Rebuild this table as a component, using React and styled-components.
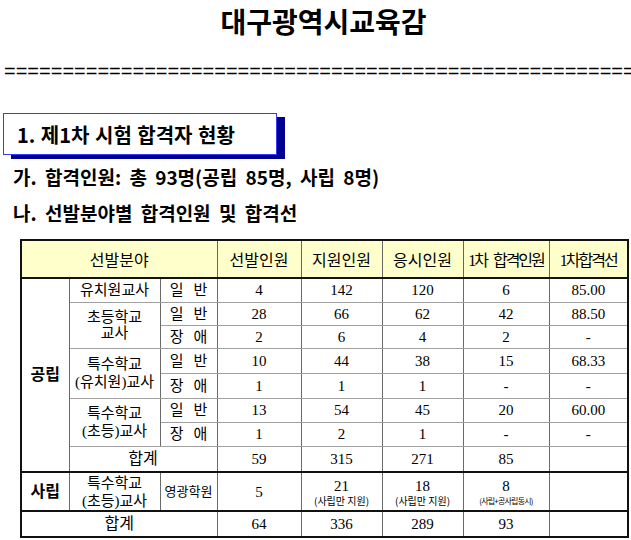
import React from "react";
import styled, { createGlobalStyle } from "styled-components";

const GlobalStyle = createGlobalStyle`
  html, body { margin: 0; padding: 0; background: #fff; }
  body { font-family: "Noto Sans CJK KR", sans-serif; color: #000; }
`;

const Page = styled.div`
  width: 631px;
  height: 540px;
  overflow: hidden;
`;

const Title = styled.h1`
  margin: 0;
  padding-left: 16px;
  height: 43px;
  line-height: 43px;
  text-align: center;
  font-size: 28px;
  font-weight: 700;
`;

const Rule = styled.div`
  margin-top: 18px;
  padding-left: 4px;
  width: 627px;
  height: 20px;
  line-height: 20px;
  font-family: "Liberation Sans", sans-serif;
  font-size: 20px;
  white-space: nowrap;
  overflow: hidden;
`;

const SectionBox = styled.div`
  margin: 32px 0 0 3px;
  width: 274px;
  height: 42px;
  box-sizing: border-box;
  border: 1px solid #3a3aff;
  box-shadow: 8px 4px 0 #000090;
  display: flex;
  align-items: center;
  padding-left: 13px;
  font-size: 20px;
  font-weight: 700;
  word-spacing: 1px;
  white-space: nowrap;
`;

const Lines = styled.div`
  margin-top: 9px;
  padding-left: 13px;
  display: flex;
  flex-direction: column;
  gap: 10px;
`;

const Line = styled.div`
  height: 26px;
  line-height: 26px;
  font-size: 19px;
  font-weight: 700;
  word-spacing: 4px;
  white-space: nowrap;
`;

const Table = styled.table`
  margin: 13px 0 0 20px;
  width: 607px;
  border-collapse: collapse;
  table-layout: fixed;
  border: 2px solid #111;
  font-family: "Liberation Serif", "Noto Sans CJK KR", serif;
`;

const Row = styled.tr`
  height: ${(p) => p.$h}px;
  & > td {
    border-top: ${(p) => (p.$thick ? "2px solid #111" : "1px solid #a0a0a0")};
  }
`;

const Th = styled.th`
  background: #ffffcc;
  font-weight: 400;
  font-size: 16px;
  letter-spacing: ${(p) => (p.$tight ? "-2px" : "0")};
  word-spacing: ${(p) => (p.$tight ? "4px" : "0")};
  border-left: 1px solid #666;
  border-right: 1px solid #666;
  border-bottom: 2px solid #111;
  padding: 0;
  white-space: nowrap;
`;

const Td = styled.td`
  padding: 0;
  text-align: center;
  vertical-align: middle;
  border-left: 1px solid #6a6a6a;
  border-right: 1px solid #6a6a6a;
  border-bottom: 1px solid #a0a0a0;
  font-size: ${(p) => p.$size || 15}px;
  font-weight: ${(p) => (p.$bold ? 700 : 400)};
  line-height: ${(p) => p.$lh || 18}px;
  white-space: nowrap;
`;

const Spaced = styled.span`
  word-spacing: 6px;
`;

const Num = styled.div`
  line-height: 18px;
`;

const Note = styled.div`
  font-family: "Noto Sans CJK KR", sans-serif;
  font-size: ${(p) => p.$size || 10}px;
  line-height: 12px;
  letter-spacing: ${(p) => (p.$tight ? "-0.8px" : "0")};
`;

const Ilban = () => <Spaced>일 반</Spaced>;
const Jangae = () => <Spaced>장 애</Spaced>;

export default function App() {
  return (
    <Page>
      <GlobalStyle />
      <Title>대구광역시교육감</Title>
      <Rule>{"=".repeat(54)}</Rule>
      <SectionBox>1. 제1차 시험 합격자 현황</SectionBox>
      <Lines>
        <Line>가. 합격인원: 총 93명(공립 85명, 사립 8명)</Line>
        <Line>나. 선발분야별 합격인원 및 합격선</Line>
      </Lines>
      <Table>
        <colgroup>
          <col style={{ width: 48 }} />
          <col style={{ width: 91 }} />
          <col style={{ width: 57 }} />
          <col style={{ width: 84 }} />
          <col style={{ width: 81 }} />
          <col style={{ width: 81 }} />
          <col style={{ width: 86 }} />
          <col style={{ width: 79 }} />
        </colgroup>
        <thead>
          <tr style={{ height: 38 }}>
            <Th colSpan={3}>선발분야</Th>
            <Th>선발인원</Th>
            <Th>지원인원</Th>
            <Th>응시인원</Th>
            <Th $tight>1차 합격인원</Th>
            <Th $tight>1차합격선</Th>
          </tr>
        </thead>
        <tbody>
          <Row $h={24}>
            <Td rowSpan={8} $bold $size={16}>공립</Td>
            <Td>유치원교사</Td>
            <Td><Ilban /></Td>
            <Td>4</Td><Td>142</Td><Td>120</Td><Td>6</Td><Td>85.00</Td>
          </Row>
          <Row $h={23}>
            <Td rowSpan={2} $lh={16}>초등학교<br />교사</Td>
            <Td><Ilban /></Td>
            <Td>28</Td><Td>66</Td><Td>62</Td><Td>42</Td><Td>88.50</Td>
          </Row>
          <Row $h={23}>
            <Td><Jangae /></Td>
            <Td>2</Td><Td>6</Td><Td>4</Td><Td>2</Td><Td>-</Td>
          </Row>
          <Row $h={25}>
            <Td rowSpan={2} $lh={18}>특수학교<br />(유치원)교사</Td>
            <Td><Ilban /></Td>
            <Td>10</Td><Td>44</Td><Td>38</Td><Td>15</Td><Td>68.33</Td>
          </Row>
          <Row $h={25}>
            <Td><Jangae /></Td>
            <Td>1</Td><Td>1</Td><Td>1</Td><Td>-</Td><Td>-</Td>
          </Row>
          <Row $h={24}>
            <Td rowSpan={2} $lh={18}>특수학교<br />(초등)교사</Td>
            <Td><Ilban /></Td>
            <Td>13</Td><Td>54</Td><Td>45</Td><Td>20</Td><Td>60.00</Td>
          </Row>
          <Row $h={24}>
            <Td><Jangae /></Td>
            <Td>1</Td><Td>2</Td><Td>1</Td><Td>-</Td><Td>-</Td>
          </Row>
          <Row $h={26}>
            <Td colSpan={2} $size={16}>합계</Td>
            <Td>59</Td><Td>315</Td><Td>271</Td><Td>85</Td><Td />
          </Row>
          <Row $h={39} $thick>
            <Td $bold $size={16}>사립</Td>
            <Td $lh={18}>특수학교<br />(초등)교사</Td>
            <Td $size={13}>영광학원</Td>
            <Td>5</Td>
            <Td><Num>21</Num><Note>(사립만 지원)</Note></Td>
            <Td><Num>18</Num><Note>(사립만 지원)</Note></Td>
            <Td><Num>8</Num><Note $size={8} $tight>(사립+공사립동시)</Note></Td>
            <Td />
          </Row>
          <Row $h={26} $thick>
            <Td colSpan={3} $size={16}>합계</Td>
            <Td>64</Td><Td>336</Td><Td>289</Td><Td>93</Td><Td />
          </Row>
        </tbody>
      </Table>
    </Page>
  );
}
